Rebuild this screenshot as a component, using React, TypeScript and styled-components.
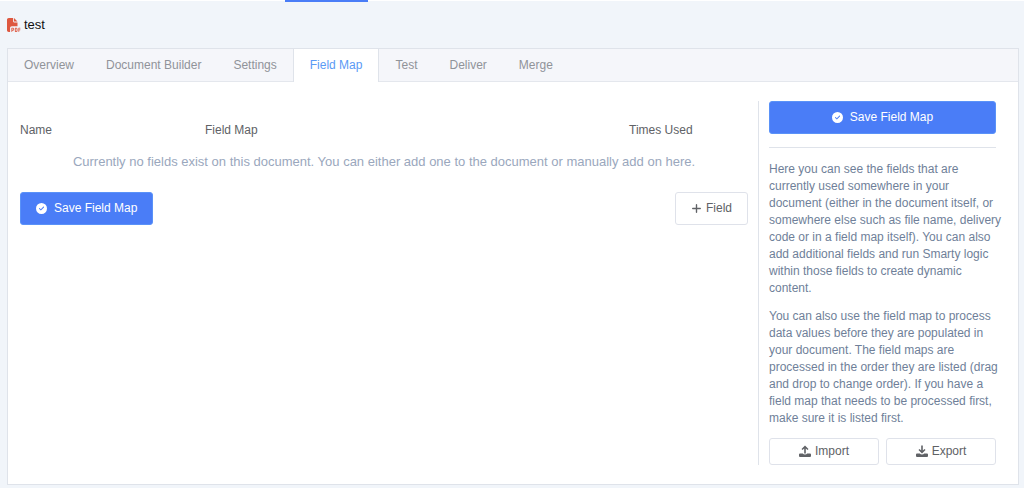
import React from "react";
import styled, { createGlobalStyle, css } from "styled-components";
import { FaCircleCheck, FaFilePdf, FaPlus } from "react-icons/fa6";

const GlobalStyle = createGlobalStyle`
  * { box-sizing: border-box; }
  body {
    margin: 0;
    background: #f1f5fa;
    color: #606266;
    font-family: "Liberation Sans", Arial, sans-serif;
    font-size: 12px;
    line-height: 17px;
  }
`;

const TopNav = styled.nav`
  height: 1px;
  padding-left: 285px;
  background: #fff;
`;

const TopNavLink = styled.a`
  display: block;
  width: 83px;
  height: 2px;
  background: #4a7df7;
`;

const Page = styled.main`
  padding: 15px 5px 3px 7px;
`;

const Title = styled.h1`
  display: flex;
  align-items: center;
  gap: 3px;
  margin: 0 0 14px;
  color: #111;
  font-size: 13px;
  font-weight: 400;
  line-height: 18px;

  svg { color: #de5840; }
`;

const Card = styled.section`
  border: 1px solid #dfe3ea;
  background: #fff;
`;

const TabBar = styled.div`
  display: flex;
  height: 33px;
  border-bottom: 1px solid #e4e7ed;
  background: #f5f6fa;
`;

const Tab = styled.button<{ $active?: boolean }>`
  height: 33px;
  padding: 0 16px;
  border: 0;
  background: transparent;
  color: #909399;
  font: inherit;

  ${({ $active }) =>
    $active &&
    css`
      border: solid #dfe3ea;
      border-width: 0 1px;
      background: #fff;
      color: #5b9af5;
    `}
`;

const Panel = styled.div`
  display: flex;
  padding: 19px 12px 19px 12px;
`;

const Content = styled.div`
  flex: 1;
  min-width: 0;
  padding: 19px 10px 0 0;
`;

const FieldTable = styled.table`
  width: 100%;
  border-collapse: collapse;
  table-layout: fixed;
`;

const HeadCell = styled.th<{ $width?: number }>`
  width: ${({ $width }) => ($width ? `${$width}px` : "auto")};
  padding: 2px 0;
  font-weight: 400;
  text-align: left;
`;

const EmptyCell = styled.td`
  padding: 12px 0 21px;
  color: #9aa7bd;
  font-size: 13px;
  line-height: 18px;
  text-align: center;
`;

const Actions = styled.div`
  display: flex;
  justify-content: space-between;
`;

const Button = styled.button<{ $primary?: boolean; $block?: boolean; $small?: boolean }>`
  display: flex;
  flex: ${({ $small }) => ($small ? "1" : "none")};
  align-items: center;
  justify-content: center;
  gap: ${({ $primary }) => ($primary ? 7 : 4)}px;
  width: ${({ $block }) => ($block ? "100%" : "auto")};
  height: ${({ $small }) => ($small ? 27 : 33)}px;
  padding: 0 15px;
  border: 1px solid ${({ $primary }) => ($primary ? "#5a92f8" : "#dfe2ea")};
  border-radius: 3px;
  background: ${({ $primary }) => ($primary ? "#4a7df7" : "#fff")};
  color: ${({ $primary }) => ($primary ? "#fff" : "#606266")};
  font: inherit;
`;

const Sidebar = styled.aside`
  width: 248px;
  padding: 0 10px;
  border-left: 1px solid #dfe3ea;
`;

const SidebarControls = styled.div`
  width: 227px;
`;

const Divider = styled.hr`
  margin: 13px 0;
  border: 0;
  border-top: 1px solid #dfe3ea;
`;

const HelpText = styled.p`
  width: 236px;
  margin: 0 0 11px;
  color: #6f7f99;
`;

const ButtonPair = styled.div`
  display: flex;
  gap: 7px;
`;

const TransferIcon = ({ down = false }: { down?: boolean }) => (
  <svg width="12" height="13" viewBox="0 0 12 13" fill="currentColor" aria-hidden="true">
    <path
      d={
        down
          ? "M5.2 .5H6.8V5.6L8.5 4L9.5 5.1L6 8.6L2.5 5.1L3.5 4L5.2 5.6Z"
          : "M5.2 8.6H6.8V3.4L8.5 5L9.5 3.9L6 .4L2.5 3.9L3.5 5L5.2 3.4Z"
      }
    />
    <path d="M1 8.6H3.9Q4.4 9.6 6 9.6T8.1 8.6H11Q12 8.6 12 9.6V11Q12 12 11 12H1Q0 12 0 11V9.6Q0 8.6 1 8.6Z" />
  </svg>
);

const tabs = ["Overview", "Document Builder", "Settings", "Field Map", "Test", "Deliver", "Merge"];

export default function App() {
  return (
    <>
      <GlobalStyle />
      <TopNav>
        <TopNavLink href="#documents" aria-label="Documents" />
      </TopNav>
      <Page>
        <Title>
          <FaFilePdf size={14} />
          test
        </Title>
        <Card>
          <TabBar role="tablist">
            {tabs.map((tab) => (
              <Tab key={tab} type="button" role="tab" aria-selected={tab === "Field Map"} $active={tab === "Field Map"}>
                {tab}
              </Tab>
            ))}
          </TabBar>
          <Panel>
            <Content>
              <FieldTable>
                <thead>
                  <tr>
                    <HeadCell $width={185}>Name</HeadCell>
                    <HeadCell>Field Map</HeadCell>
                    <HeadCell $width={119}>Times Used</HeadCell>
                  </tr>
                </thead>
                <tbody>
                  <tr>
                    <EmptyCell colSpan={3}>
                      Currently no fields exist on this document. You can either add one to the document or manually add on here.
                    </EmptyCell>
                  </tr>
                </tbody>
              </FieldTable>
              <Actions>
                <Button type="button" $primary>
                  <FaCircleCheck size={11} />
                  Save Field Map
                </Button>
                <Button type="button">
                  <FaPlus size={11} />
                  Field
                </Button>
              </Actions>
            </Content>
            <Sidebar>
              <SidebarControls>
                <Button type="button" $primary $block>
                  <FaCircleCheck size={11} />
                  Save Field Map
                </Button>
                <Divider />
              </SidebarControls>
              <HelpText>
                Here you can see the fields that are currently used somewhere in your document (either in the document
                itself, or somewhere else such as file name, delivery code or in a field map itself). You can also add
                additional fields and run Smarty logic within those fields to create dynamic content.
              </HelpText>
              <HelpText>
                You can also use the field map to process data values before they are populated in your document. The
                field maps are processed in the order they are listed (drag and drop to change order). If you have a
                field map that needs to be processed first, make sure it is listed first.
              </HelpText>
              <SidebarControls>
                <ButtonPair>
                  <Button type="button" $small>
                    <TransferIcon />
                    Import
                  </Button>
                  <Button type="button" $small>
                    <TransferIcon down />
                    Export
                  </Button>
                </ButtonPair>
              </SidebarControls>
            </Sidebar>
          </Panel>
        </Card>
      </Page>
    </>
  );
}
